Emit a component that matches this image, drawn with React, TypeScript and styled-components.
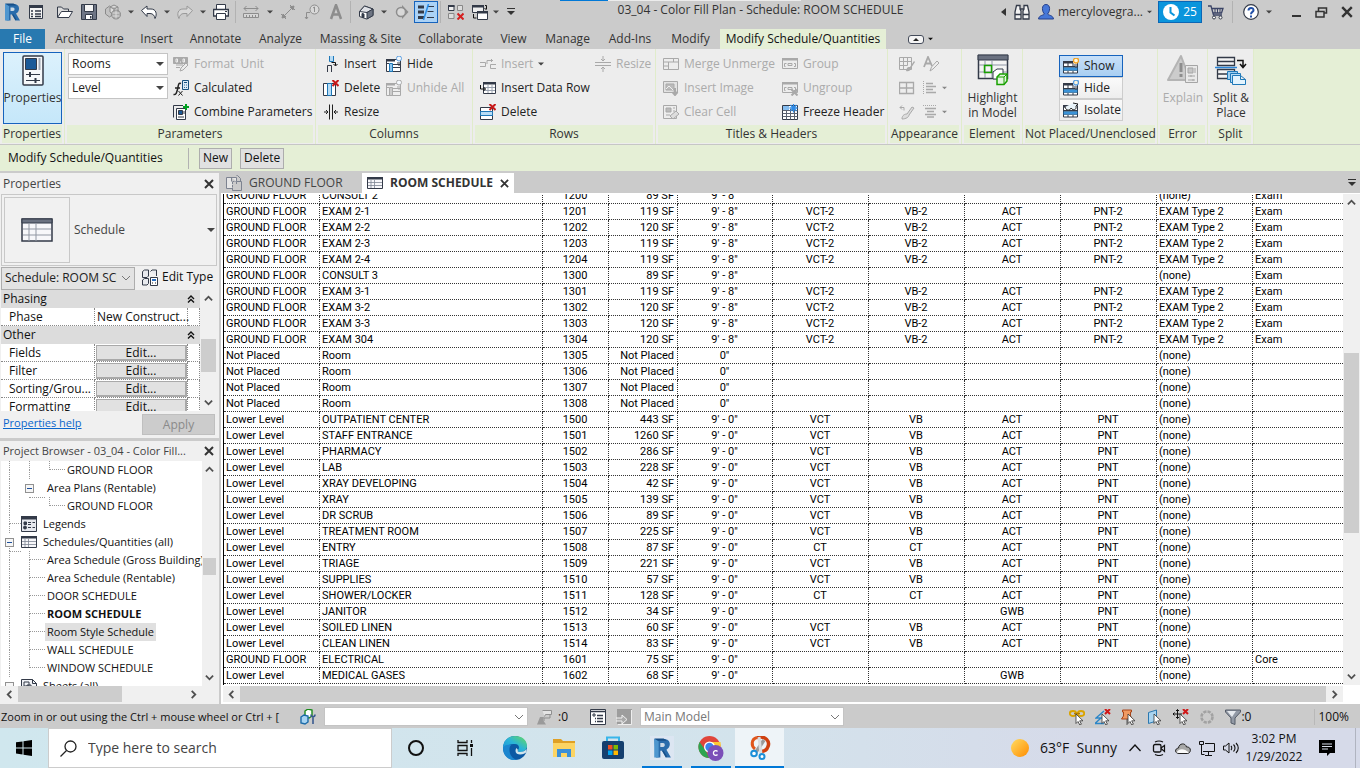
import React from 'react';
import styled, { createGlobalStyle, css } from 'styled-components';

const Global = createGlobalStyle`
  *, *::before, *::after { box-sizing: border-box; }
  html, body, #root { height: 100%; margin: 0; }
  body { font: 12px/16px "Open Sans", "Segoe UI", sans-serif; color: #222; background: #cbcbcb; overflow: hidden; }
  button, input, select { font: inherit; color: inherit; margin: 0; }
  button { background: none; border: 0; padding: 0; }
  svg { display: block; flex: none; }
`;

const ink = '#333a48';
const blue = '#1f78b8';
const gray = '#a9a9a9';

/* ---------- icon helpers ---------- */
type IconProps = { w?: number; h?: number; box?: string; children: React.ReactNode };
const Icon = ({ w = 16, h, box, children }: IconProps) => (
  <svg width={w} height={h ?? w} viewBox={box ?? `0 0 ${w} ${h ?? w}`} fill="none" stroke={ink} aria-hidden="true">
    {children}
  </svg>
);
const Caret = ({ color = '#444', w = 8 }: { color?: string; w?: number }) => (
  <Icon w={w} h={4} box="0 0 8 4"><path d="M0 0h8L4 4z" fill={color} stroke="none" /></Icon>
);
const Chevron = ({ turn = 0, color = '#505050', s = 9, sw = 2 }: { turn?: number; color?: string; s?: number; sw?: number }) => (
  <Icon w={s} box="0 0 10 10"><path d="M1 7l4-4 4 4" transform={`rotate(${turn} 5 5)`} stroke={color} strokeWidth={sw} /></Icon>
);
const Cross = ({ s = 10, sw = 2, color = '#333' }: { s?: number; sw?: number; color?: string }) => (
  <Icon w={s} box="0 0 10 10"><path d="M1 1l8 8M9 1L1 9" stroke={color} strokeWidth={sw} /></Icon>
);

const RevitLogo = ({ s = 18 }: { s?: number }) => (
  <Icon w={s} box="0 0 18 18">
    <path d="M2 1h8.500c7.500 0 6.500 8 2.500 9.500l4 7h-4.500L9 11.500H7.500v6H3.500z" fill="#2a6cab" stroke="none" />
    <path d="M2 .500l4 2.500v14.500H2z" fill="#4f96cf" stroke="none" />
    <path d="M7.500 4.500H10c2 0 2 3.500 0 3.500H7.500z" fill="#cbd9e6" stroke="none" />
    <path d="M2 .500h8.500l3 2H5.500z" fill="#174f88" stroke="none" />
    <path d="M9 11.500l3.500 6 1-1-3-5z" fill="#174f88" stroke="none" />
  </Icon>
);
const UiIcon = () => (
  <Icon><path d="M1.500 1.500h13v13h-13z" fill="#f4f4f4" /><path d="M1 1h14v3H1z" fill={ink} stroke="none" /><path d="M3 7h2M3 10h2M3 12.500h2M7 7h6M7 10h6M7 12.500h6" strokeWidth="1.500" /></Icon>
);
const OpenIcon = () => (
  <Icon><path d="M.500 13V3h4l2 2h5v3" fill="#ddd" /><path d="M.500 13.500L4.500 7.500h11L12 13.500z" fill="#fff" /></Icon>
);
const SaveIcon = () => (
  <Icon><path d="M.500.500h15v15h-15z" fill="#6e7585" /><path d="M3.500.500h9v7h-9z" fill="#f5f5f5" /><path d="M4.500 10.500h7v5h-7z" fill="#fff" /><path d="M9 12h1.500v2.500H9z" fill={ink} stroke="none" /></Icon>
);
const SyncIcon = () => (
  <Icon><g stroke="#8a8a8a" fill="#c2c2c2"><path d="M.500 5l4-3 4 3v5l-4 3-4-3z" /><path d="M5 3l4-2 4 2v5l-4 3-4-3z" fill="#dcdcdc" /><path d="M5 3l4 2 4-2M9 5v6" /><circle cx="11" cy="10.500" r="4.500" fill="#aaa" /><path d="M7.500 9h7M7.500 12h7M11 6.500v8" stroke="#ddd" /></g></Icon>
);
const UndoIcon = () => (
  <Icon><path d="M.500 6.500L6 2v3h4c5 0 6.500 5 4 9.500-.500-3-2-5-5-5H6v3z" fill="#fff" stroke={ink} /></Icon>
);
const RedoIcon = () => (
  <Icon><path d="M15.500 6.500L10 2v3H6C1 5-.500 10 2 14.500c.500-3 2-5 5-5h3v3z" fill="#d8d8d8" stroke="#999" /></Icon>
);
const PrintIcon = () => (
  <Icon><path d="M3.500.500h9v6h-9z" fill="#fff" /><path d="M.500 5.500h15v6.500H.500z" fill="#fff" strokeWidth="1.500" /><path d="M3.500 9.500h9v6h-9z" fill="#fff" /><path d="M12 7.500h2" /></Icon>
);
const MeasureIcon = () => (
  <Icon><g stroke="#8d8d8d"><path d="M1 4.500h14M3.500 2L1 4.500 3.500 7M12.500 2L15 4.500 12.500 7" /><path d="M.500 9.500h15v4H.500z" fill="#d6d6d6" /><path d="M3.500 11v2M6.500 11v2M9.500 11v2M12.500 11v2" /></g></Icon>
);
const DimIcon = () => (
  <Icon><g stroke="#8d8d8d"><path d="M3 13L13 3M1 10l5 5M10 1l5 5" /><path d="M2 14l1-4 3 3zM14 2l-4 1 3 3z" fill="#8d8d8d" /></g></Icon>
);
const TagIcon = () => (
  <Icon><g stroke="#8d8d8d"><circle cx="10.500" cy="5.500" r="4.500" fill="#d8d8d8" /><path d="M10.500 3v5M9 4l1.500-1M6 8.500H2.500V15M1 13l1.500 2L4 13" /></g></Icon>
);
const LetterIcon = () => (
  <Icon><path d="M3 15L8 1l5 14M4.500 10.500h7" stroke="#8d8d8d" strokeWidth="2.500" /></Icon>
);
const HouseIcon = () => (
  <Icon><path d="M1.500 7.500l5-5.500 8.500 3v6.500L8.500 15l-7-2.500z" fill="#fff" /><path d="M6.500 2l8.500 3-6 3.500-7.500-1z" fill="#dfe1e6" /><path d="M9 8.500L15 5v6.500L9 15z" fill="#6d7482" /><path d="M4 9.500l2 .500v3.500L4 13z" fill={ink} /></Icon>
);
const SectionIcon = () => (
  <Icon><path d="M8 1l6.500 7L8 15z" fill="#8d8d8d" stroke="none" /><circle cx="7" cy="8" r="4.500" fill="#d8d8d8" stroke="#8d8d8d" strokeWidth="1.500" /></Icon>
);
const ThinIcon = () => (
  <Icon><path d="M0 3h6M0 8h6M0 13.500h6" strokeWidth="3" /><path d="M10 2.500h6M9.500 7.500h6M9 13.500h7" /><path d="M10.500 0L5.500 16" stroke="#2a8de8" strokeWidth="1.500" /></Icon>
);
const CloseHiddenIcon = () => (
  <Icon><path d="M.500 1.500H6v5H.500z" fill="#eee" /><path d="M0 1h6.500v2H0z" fill={ink} stroke="none" /><path d="M9.500 1.500h5v5h-5zM.500 9.500H6v5H.500z" fill="#ddd" stroke="#888" /><path d="M9.500 9.500l6 6m0-6l-6 6" stroke="#d42020" strokeWidth="2" /></Icon>
);
const SwitchIcon = () => (
  <Icon><path d="M.500 1.500h11v7H.500z" fill="#eee" /><path d="M0 1h12v2.500H0z" fill={ink} stroke="none" /><path d="M5.500 7.500h10v8h-10z" fill="#fff" /><path d="M5 7h11v2.500H5z" fill={ink} stroke="none" /><path d="M1.500 10v4h3M13 1.500h1.500V5M12.500 4l2 2" stroke="#111" /></Icon>
);
const MoreIcon = () => (
  <Icon w={10} h={10}><path d="M1 1.500h8" stroke="#333" /><path d="M1 4h8L5 8z" fill="#333" stroke="none" /></Icon>
);
const Binoculars = () => (
  <Icon><path d="M2.500 1.500H6V5l1 2v8H1V8zM10 1.500h3.500L15 8v7H9V7l1-2z" fill="#f2f2f2" strokeWidth="1.300" /><path d="M6 5h4M1 10.500h6M9 10.500h6" strokeWidth="1.300" /></Icon>
);
const UserIcon = () => (
  <Icon><path d="M8 .500c5 0 4 7.500 1.500 9.500 1 1.500 5.500 1 6 5H.500c.500-4 5-3.500 6-5C4 8 3 .500 8 .500z" fill="#4677d8" stroke="#27408b" /></Icon>
);
const ClockIcon = () => (
  <Icon><circle cx="8" cy="8" r="8" fill="#fff" stroke="none" /><path d="M7.500 3v5.500l4 3" stroke="#0a95dc" strokeWidth="2" /></Icon>
);
const CartIcon = () => (
  <Icon><path d="M0 2h3l2.500 9H14M3.500 4.500H15L13.500 9H5" stroke="#3b4466" strokeWidth="1.300" /><path d="M7 5v4M9.500 5v4M12 5v4" stroke="#3b4466" /><circle cx="6" cy="13.500" r="1.500" fill="#fff" /><circle cx="12.500" cy="13.500" r="1.500" fill="#fff" /></Icon>
);
const HelpIcon = () => (
  <Icon><circle cx="8" cy="8" r="7.300" fill="#fff" strokeWidth="1.200" /><path d="M5.500 6.500C5.500 3 10.800 3.200 10.500 6.300 10.300 8 8 7.800 8 10.200M8 11.500v2" stroke="#2250a8" strokeWidth="2" /></Icon>
);

/* ---------- ribbon icons ---------- */
const PropertiesBig = () => (
  <Icon w={22} h={31}><rect x="1" y="1" width="20" height="29" rx="1" fill="#f6f8fa" strokeWidth="1.500" /><path d="M3.500 3.500h11v11h-11z" fill="#1b5a98" /><path d="M17.500 3v12" stroke="#a0a8b4" strokeWidth="2" /><path d="M4 19.500h14M4 25.500h14" /><path d="M8 17v5M13.500 23v5" strokeWidth="2" /></Icon>
);
const FormatIcon = () => (
  <Icon><path d="M.500 1.500h14v6H.500z" fill="#aaa" stroke={gray} /><path d="M3 3h1.500v3H3zM10 3h1.500v3H10zM7 6h1" stroke="#eee" /><path d="M3 9h7M3 11.500h4" stroke={gray} /><path d="M7 15l1-3 5-5 2 2-5 5z" fill="#eee" stroke={gray} /></Icon>
);
const FxIcon = () => (
  <Icon><path d="M8 3.500C5 2 5.500 6 4.500 9.500S3 15 .500 14.500M2 8h5" stroke="#222" strokeWidth="1.500" /><path d="M5.500 11l4 4.500m0-4.500l-4 4.500" stroke="#222" /><path d="M9.500.500h6v9h-6z" fill="#d9ebf8" stroke="#16507e" /><path d="M11 2.500h3M11 5h.800M13.200 5h.800M11 7.500h.800M13.200 7.500h.800" stroke="#16507e" /></Icon>
);
const CombineIcon = () => (
  <Icon><path d="M.500 13.500v-12H10" /><path d="M3.500 4.500h9v11h-9z" fill="#fff" /><path d="M5.500 6.500h4v4h-4z" fill="#1b5a98" /><path d="M5 13h6M11 7v3" /><path d="M13 0v6M10 3h6" stroke="#00a020" strokeWidth="2" /></Icon>
);
const ColInsert = () => (
  <Icon><path d="M6.500 0v5.500h4V0" fill="#b8dcf5" stroke={blue} /><path d="M4.500 16V9.500h4V16" /><path d="M8.500 6.500h4v3M10.500 8l2 2 2-2" stroke="#111" /></Icon>
);
const ColDelete = () => (
  <Icon><path d="M.500 3.500h12v12H.500z" fill="#fff" /><path d="M4.500 3.500h4v12h-4z" fill="#b8dcf5" stroke={blue} /><path d="M9.500 0l6 6m0-6l-6 6" stroke="#c81818" strokeWidth="2" /></Icon>
);
const ColResize = () => (
  <Icon><path d="M6.500.500v15M9.500.500v15M1 8h4M11 8h4M3 6l2 2-2 2M13 6l-2 2 2 2" stroke="#222" /></Icon>
);
const HideCol = ({ off }: { off?: boolean }) => {
  const c = off ? gray : ink;
  return <Icon><path d="M.500 3.500h14v12H.500z" fill={off ? '#eee' : '#fff'} stroke={c} /><path d="M0 3h9v2.500H0z" fill={c} stroke="none" /><path d="M6 8.500h8M6 11.500h8M1 7.500h2" stroke={c} /><path d="M3.500 7.500h3v8h-3z" fill={off ? '#ccc' : '#8fc6ee'} stroke={off ? gray : blue} /><circle cx="13" cy="2.500" r="2.500" fill="#f4f8fc" stroke={off ? gray : '#5a9ee0'} /><path d="M12 6v3h2V6" stroke={c} /></Icon>;
};
const RowInsertOff = () => <Icon><path d="M0 6.500h5.500v4H0M16 12.500h-5.500v-4H16M7 8V4.500h6M11.500 3v3" stroke={gray} /></Icon>;
const RowResizeOff = () => <Icon><path d="M0 6.500h16M0 9.500h16M8 0v5M8 11v5M6 3l2 2 2-2M6 13l2-2 2 2" stroke={gray} /></Icon>;
const InsertRow = () => <Icon><path d="M3.500 2.500h12v11h-12z" fill="#fff" /><path d="M3 2h13v2.500H3z" fill={ink} stroke="none" /><path d="M4 7.500h11M4 10.500h11M8 5v8M12 5v8" stroke="#9ba3b0" /><path d="M.500 5v4h5M3.500 7l2 2-2 2" stroke="#111" /></Icon>;
const DeleteRow = () => <Icon><path d="M.500 3.500h12v12H.500z" fill="#fff" /><path d="M.500 7.500h12v4H.500z" fill="#b8dcf5" stroke={blue} /><path d="M9.500 0l6 6m0-6l-6 6" stroke="#c81818" strokeWidth="2" /></Icon>;
const MergeIcon = () => <Icon><path d="M.500 2.500h15v11H.500zM.500 6h15M5.500 6v7.500M10.500 2.500V6M.500 10h5" stroke={gray} /></Icon>;
const ImageIcon = () => <Icon><path d="M.500 1.500h14v11H.500z" fill="#e2e2e2" stroke={gray} /><path d="M3 4h8v6H3z" fill="#bbb" stroke={gray} /><path d="M3 9l3-3 4 4" stroke="#eee" /><path d="M12 8v6M9.500 12l2.500 3 2.500-3" stroke={gray} strokeWidth="2" /></Icon>;
const ClearIcon = () => <Icon><path d="M.500 1.500h13v13H.500z" stroke={gray} /><path d="M3 4h5v4H3z" fill="#bbb" stroke={gray} /><path d="M10 4h2M10 7h2M3 11h4" stroke={gray} /><path d="M7 12l6-5 3 3-6 5z" fill="#ddd" stroke={gray} /></Icon>;
const GroupIcon = ({ x }: { x?: boolean }) => <Icon><path d="M.500 2.500h15v10H.500z" stroke={gray} /><path d="M0 2h16v2.500H0z" fill={gray} stroke="none" /><path d="M3.500 10.500h-1v-3h2M12 7.500h1.500v3H12M6 7.500h4v2H6z" stroke={gray} />{x && <path d="M9.500 9.500l6 6m0-6l-6 6" stroke={gray} strokeWidth="2" />}</Icon>;
const FreezeIcon = () => <Icon><path d="M.500 1.500h15v14H.500z" fill="#fff" /><path d="M.500 6.500h15M.500 9.500h15M.500 12.500h15M4.500 5v10.500M8.500 5v10.500M12.500 5v10.500" stroke="#5b6270" /><path d="M1 2h6v4H1z" fill="#85bdf0" stroke="none" /><path d="M11.500-.500v9M7.500 4h8M8.500 1l6 6M14.500 1l-6 6" stroke="#2f8be6" strokeWidth="1.300" /></Icon>;
const ShadeIcon = () => <Icon><path d="M.500 1.500h12v12H.500zM.500 5.500h12M.500 9.500h8M4.500 1.500v12M8.500 1.500v8" stroke={gray} /><path d="M7 15c1-5 3-4 4-4l4-6 1 1-4 6c0 2-2 4-5 3z" fill={gray} stroke="none" /></Icon>;
const FontIcon = () => <Icon><path d="M1 11L5 1l4 9M2.500 7.500h5" stroke={gray} strokeWidth="1.800" /><path d="M7 15l1.500-4L14 5l2 2-6 6z" fill="#eee" stroke={gray} /></Icon>;
const BordersIcon = () => <Icon><path d="M.500 2.500h14v11H.500zM7.500 2.500v11M.500 8h14" stroke={gray} strokeWidth="1.300" /></Icon>;
const ResetIcon = () => <Icon><path d="M3 15c0-4 3-5 5-5l5-7 2 1-5 7c0 2-3 4-7 4z" stroke={gray} fill="#ddd" /><path d="M1 3.500h4v3M3 1.500l-2 2 2 2" stroke={gray} /></Icon>;
const AlignIcon = ({ mid }: { mid?: boolean }) => <Icon>{mid ? <path d="M0 1.500h14" stroke={gray} strokeDasharray="1 1" /> : <path d="M.500 1v14" stroke={gray} strokeDasharray="1 1" />}<path d={mid ? 'M2 4.500h11M4 7.500h7M2 10.500h11M4 13h7' : 'M3 3.500h7M3 6.500h10M3 9.500h7M3 12.500h10'} stroke={gray} strokeWidth="1.300" /></Icon>;
const HighlightBig = () => (
  <Icon w={32} h={32}><path d="M1.500 1.500h29v23h-29z" fill="#f4f4f4" strokeWidth="1.500" /><path d="M1 1h30v5H1z" fill="#6a7180" /><path d="M2 11h28M2 18h28M8 6v18M15 6v18" stroke="#8e95a4" /><path d="M7.500 11.500h7v7h-7z" stroke="#18a000" strokeWidth="1.500" /><path d="M16 18l4-3h6v6l-4 4h-6z" fill="#fff" /><path d="M20 23l3-3h7v7l-3 3.500h-7z" fill="#e3f5df" stroke="#18a000" strokeWidth="1.500" /><path d="M20 23h7v7.500M27 23l3-3" stroke="#18a000" /></Icon>
);
const RowState = ({ bulb, glasses }: { bulb?: string; glasses?: boolean }) => (
  <Icon><path d="M.500 3.500h14v11.500H.500z" fill="#fff" /><path d="M0 3h10v2.500H0z" fill={ink} stroke="none" /><path d="M1 8.500h13M5 4v4M10 5v3M5 13v2M10 13v2" stroke={ink} /><path d="M.500 9.500h14v3H.500z" fill="#3b93d8" stroke="#16507e" strokeWidth=".600" />{bulb && <><circle cx="13" cy="2.500" r="2.500" fill="#fff6dc" stroke={bulb} strokeWidth="1.300" /><path d="M12 6v3h2V6" fill="#fff" /></>}{glasses && <path d="M2 5c1 4 5 4 6 1 2 3 6 2 5-2l2-2-5-1" fill="#e8f2f8" stroke="#222" />}</Icon>
);
const ExplainBig = () => (
  <Icon w={32} h={32}><path d="M14 2L1 26h22z" fill="#ccc" stroke="#b4b4b4" strokeWidth="2" strokeLinejoin="round" /><path d="M14 9v9M14 20v3" stroke="#8d8d8d" strokeWidth="3" /><path d="M18.500 11.500h12v17h-12z" fill="#e9e9e9" stroke="#a5a5a5" /><path d="M21 14h5v5h-5z" fill="#c6c6c6" stroke="#a5a5a5" /><path d="M28 14v5M21 22h7M21 26h7M24 21v2M26 25v2" stroke="#a5a5a5" /></Icon>
);
const SplitBig = () => (
  <Icon w={32} h={32}><path d="M2.500 3.500h17v8h-17zM2.500 15.500h17v9h-17zM3 7.500h16M3 20h16" fill="#f4f4f4" strokeWidth="1.300" /><path d="M0 13.500h22" stroke="#2b86d8" strokeWidth="1.500" /><path d="M22 6.500h6v6M25 10l3 3.500 3-3.500" stroke="#111" strokeWidth="1.500" /><path d="M12.500 17.500h10v8h-10z" fill="#9bcdf0" stroke={blue} /><path d="M15.500 19.500h10v9h-10z" fill="#b8dcf5" stroke={blue} /><path d="M17.500 21.500h8l5 4v5h-13zM25.500 21.500v4h5" fill="#e3f3fd" stroke={blue} /></Icon>
);

/* ---------- tables / tree icons ---------- */
const TableIcon = ({ w = 16, h = 12 }: { w?: number; h?: number }) => (
  <Icon w={w} h={h} box="0 0 16 12"><path d="M.500.500h15v11H.500z" fill="#f7f7fa" /><path d="M0 0h16v2.500H0z" fill={ink} stroke="none" /><path d="M1 5.500h14M1 8.500h14M4 3v8M7.500 3v8" stroke="#7d8594" strokeWidth=".800" /></Icon>
);
const TableBig = () => (
  <Icon w={32} h={24}><path d="M1 1h30v22H1z" fill="#f7f7fa" strokeWidth="1.500" /><path d="M1 1h30v4H1z" fill="#6a7180" /><path d="M2 11h28M2 17h28M8 5v18M15 5v18" stroke="#9197a3" /></Icon>
);
const LegendIcon = () => <Icon><path d="M.500.500h15v15H.500z" fill="#e6e8ee" /><path d="M0 0h16v3.500H0z" fill={ink} stroke="none" /><circle cx="4" cy="11.500" r="1.500" fill={ink} /><path d="M3 6h2.500v2.500H3z" fill={ink} /><path d="M7 6.500h3M11.500 6.500H14M7 8.500h3M7 11.500h3M11.500 11.500H14" /></Icon>;
const SheetIcon = () => <Icon><path d="M.500 1.500h11l4 4v8H.500z" fill="#f0f2f6" /><path d="M11.500 1.500v4h4M3 4h5v4H3zM6 7h4v4H6z" /></Icon>;
const PlanIcon = () => <Icon><path d="M6 2.500H.500v11H6M5.500 2.500h5v4" fill="#e6e6e6" stroke="#7d8390" /><path d="M10.500 6.500h5v9h-9v-3M5.500 2.500v4M10.500.500h1l3 3v3" stroke="#7d8390" fill="none" /><path d="M6.500 7v6M6.500 6.500h4M10.500 7v3" stroke="#7d8390" strokeDasharray="2 1" /></Icon>;
const EditTypeIcon = () => <Icon w={17} h={17}><path d="M1.500 2.500l2-1.500h4v6l-1.500 1.500H1.500zM9.500 2.500L11 1h4.500v6M1.500 11l2-1.500h4v5L6 16H1.500z" fill="#e8eaee" /><path d="M9.500 8.500h7v8h-7z" fill="#fff" stroke={ink} /><path d="M11 10h4v2h-4z" fill="#2a6fc0" stroke="none" /><path d="M11 14h1M14 14h1" stroke="#222" /></Icon>;
const DoubleUp = () => <Icon w={8} h={8}><path d="M1 4l3-3 3 3M1 7.500l3-3 3 3" stroke="#111" strokeWidth="1.400" /></Icon>;

/* ---------- status bar icons ---------- */
const pointer = <path d="M7 5v9.500l2-2 1.800 3.500 1.600-.800-1.700-3.400H14z" fill="#fff" stroke="#333" strokeWidth=".800" />;
const WorksetIcon = () => <Icon><path d="M5 2l3-2 4 1v6l-3 2-4-1z" fill="#fff" stroke="#1a8a1a" strokeWidth="1.400" /><path d="M1 8l3-2 4 1v6l-3 2-4-1z" fill="#a8d4f2" stroke="#1a6aa8" strokeWidth="1.400" /><path d="M11 5.500c0 3 4 3 4 0M13 8v7" stroke="#3a5a90" strokeWidth="1.600" /></Icon>;
const EditableIcon = () => <Icon><path d="M5.500 1.500h9v4h-6l-1 2" stroke="#8f8f8f" fill="#e4e4e4" /><path d="M13 6v3H7v3" stroke="#8f8f8f" /><path d="M3 8h4l-1 3 3 4.500H0z" fill="#9a9a9a" stroke="none" /></Icon>;
const OptionsIcon = () => <Icon><path d="M.500.500h15v15H.500z" fill="#fff" /><path d="M1 2.500h14" strokeWidth="1.500" /><path d="M3 5h2v2H3z" /><path d="M7 6.500h6M7 9.500h6M7 12.500h6M5 9.500h1M5 12.500h1" strokeWidth="1.500" /></Icon>;
const AddOption = () => <Icon><path d="M1 0h15v15H1z" fill="#9d9d9d" stroke="none" /><path d="M2 15.500h13.500V1" stroke="#eee" /><path d="M0 9h6V6l5 4.500L6 15v-3H0z" fill="#aaa" stroke="#f2f2f2" /></Icon>;
const LinkSel = () => <Icon><ellipse cx="4" cy="4.500" rx="3.200" ry="2.500" stroke="#dba400" strokeWidth="1.800" /><ellipse cx="12" cy="4.500" rx="3.200" ry="2.500" stroke="#dba400" strokeWidth="1.800" /><path d="M5 4.500h6" stroke="#b07c00" strokeWidth="1.300" />{pointer}</Icon>;
const UnderSel = () => <Icon><path d="M9 2L1 9h9M6 9l-6 5.500h9" stroke="#2b86c8" strokeWidth="1.300" /><path d="M10 0l5 5m0-5l-5 5" stroke="#d01818" strokeWidth="2" />{pointer}</Icon>;
const PinSel = () => <Icon><path d="M1.500 1h9v2h-1v4l2 3H.500l2-3V3h-1z" fill="#f09a62" stroke="#a8451a" /><path d="M6 10v6" stroke="#555" />{pointer}</Icon>;
const FaceSel = () => <Icon><path d="M1.500 3.500l8-2.500v11l-8 2.500z" fill="#a9d4f0" stroke="#2b78b0" />{pointer}</Icon>;
const DragSel = () => <Icon><path d="M4.500.500v9M0 5h9M3 2L4.500.500 6 2M3 8l1.500 1.500L6 8M1.500 3.500L0 5l1.500 1.500" stroke="#111" /><path d="M10 0l5 5m0-5l-5 5" stroke="#d01818" strokeWidth="2" />{pointer}</Icon>;
const BusyIcon = () => <Icon><circle cx="8" cy="8" r="5.500" stroke="#a2a2a2" strokeWidth="2.600" strokeDasharray="3.200 1.100" /></Icon>;
const FunnelIcon = () => <Icon><path d="M.500 1h15v2L10 9v6.500L6 14V9L.500 3z" fill="#9299a5" stroke="#555c68" /><path d="M2 2h9L7 8z" fill="#e6e9ee" stroke="none" /></Icon>;

/* ---------- taskbar icons ---------- */
const WinIcon = () => <Icon><path d="M0 2.300L6.500 1.400v6H0zM7.500 1.200L16 0v7.400H7.500zM0 8.400h6.500v6L0 13.600zM7.500 8.400H16V16l-8.500-1.200z" fill="#000" stroke="none" /></Icon>;
const SearchIcon = () => <Icon w={17}><circle cx="10.500" cy="6.500" r="5.500" stroke="#222" strokeWidth="1.300" /><path d="M6.500 10.500L.500 16.500" stroke="#222" strokeWidth="1.300" /></Icon>;
const TaskView = () => <Icon w={18}><path d="M2 1v2.500h9V1M2 17v-2.500h9V17M2 6.500h9v5H2zM15.500 1v3M15.500 9v8" stroke="#111" strokeWidth="1.300" /><path d="M14 5h3v3h-3z" fill="#111" stroke="none" /></Icon>;
const EdgeIcon = () => (
  <Icon w={24}>
    <defs><linearGradient id="edgeTop" x1="0" y1="1" x2="1" y2="0"><stop offset="0" stopColor="#1a8fd8" /><stop offset=".5" stopColor="#2ab4d8" /><stop offset="1" stopColor="#68dd5a" /></linearGradient></defs>
    <circle cx="12" cy="12" r="12" fill="#0c59a4" stroke="none" />
    <path d="M0 12C0 5 5 0 12 0s12 4 12 10c0 4-4 6-7 6-2 0-3-1-2-2 2-2 1-6-3-6C6 8 1 11 0 12z" fill="url(#edgeTop)" stroke="none" />
    <path d="M0 12c1-3 5-4 8-3-3 3-2 13 6 15C6 25 0 20 0 12z" fill="#1b86cf" stroke="none" />
    <path d="M15 14c-1 1 0 2 2 2 3 0 5-1 6.500-3v3c-2 3-11 4-11-1 0-2 1-3 1-3z" fill="#d2e5ec" stroke="none" />
  </Icon>
);
const FolderIcon = () => <Icon w={22} h={20}><path d="M0 1h8l2 2h12v4H0z" fill="#dfa025" stroke="none" /><path d="M0 5h22v14H0z" fill="#fcd462" stroke="none" /><path d="M4 19v-8h14v8h-4v-4H8v4z" fill="#3a8fd8" stroke="none" /></Icon>;
const StoreIcon = () => <Icon w={24}><path d="M6 6V1.500h12V6" stroke="#38b6ea" strokeWidth="2" /><rect x="1" y="5" width="22" height="18" rx="2" fill="#153f6e" stroke="none" /><path d="M7 9h4.500v4.500H7z" fill="#f25022" stroke="none" /><path d="M12.500 9H17v4.500h-4.500z" fill="#7fba00" stroke="none" /><path d="M7 14.500h4.500V19H7z" fill="#00a4ef" stroke="none" /><path d="M12.500 14.500H17V19h-4.500z" fill="#ffb900" stroke="none" /></Icon>;
const ChromeIcon = () => (
  <Icon w={26} h={26}>
    <g stroke="none"><circle cx="11.500" cy="12" r="11" fill="#e0453a" /><path d="M1.500 7L8 16l3 7C3 23-2 14 1.500 7z" fill="#2da551" /><path d="M12 7h10.500C24 14 19 23 11 23l5-8z" fill="#fcc934" /><circle cx="11.500" cy="12" r="5.500" fill="#fff" /><circle cx="11.500" cy="12" r="4.200" fill="#3b82ec" /><circle cx="17.500" cy="18" r="8" fill="#7b4fb8" /></g>
    <path d="M19.500 16.500a2.300 2.300 0 1 0 0 3" stroke="#fff" strokeWidth="1.300" />
  </Icon>
);
const SnipIcon = () => <Icon w={22} h={24}><path d="M8 1.500c9-2 13 4 11 9-1 3-4 5-7 5" stroke="#cf4010" strokeWidth="3.500" /><path d="M8 1.500C2 3 2 10 6 13" stroke="#e0561c" strokeWidth="3" /><path d="M15 4L7 16" stroke="#9a9a9a" strokeWidth="3.500" /><path d="M10 1l2 17" stroke="#d9dcdf" strokeWidth="3" /><circle cx="5" cy="17.500" r="2.800" fill="#fff" stroke="#1b8fd8" strokeWidth="2" /><circle cx="13" cy="20.500" r="2.500" fill="#fff" stroke="#1b8fd8" strokeWidth="2" /></Icon>;
const SunIcon = () => <Icon w={18}><defs><linearGradient id="sun" x1="0" y1="0" x2="1" y2="1"><stop offset="0" stopColor="#ffdc62" /><stop offset="1" stopColor="#ff8c00" /></linearGradient></defs><circle cx="9" cy="9" r="9" fill="url(#sun)" stroke="none" /></Icon>;
const MeetIcon = () => <Icon><rect x="2.500" y="4.500" width="7.500" height="7.500" rx="1.500" stroke="#111" strokeWidth="1.300" /><path d="M10 8l3.500-2.500v6L10 8.500M4 2c3-1.500 5-1.500 8 0M4 14.500c3 1.500 5 1.500 8 0" stroke="#111" strokeWidth="1.200" /></Icon>;
const CloudIcon = () => <Icon><path d="M4 13.500c-4.500 0-4.500-5-.500-5.500C4 3 10.500 2.500 11.500 7c5-.500 5 6 1 6.500z" fill="#a8a8a8" stroke="#222" /><path d="M1.500 12.500C4 8 9 8 14 12.500l-1.500.500H4z" fill="#fafafa" stroke="none" /></Icon>;
const NetIcon = () => <Icon><path d="M6 3.500h9.500v8H4M9.500 12v3M6 15.500h7" stroke="#111" /><path d="M.500 1.500h4v3h-4zM2.500 5v9.500h3" stroke="#111" /></Icon>;
const VolIcon = () => <Icon><path d="M.500 6h2L6 3v10L2.500 10h-2z" stroke="#111" /><path d="M8 6c1 1 1 3 0 4M10.500 4.500c2 2 2 5 0 7M13 3c3 3 3 7 0 10" stroke="#111" strokeWidth="1.100" /></Icon>;
const NoteIcon = () => <Icon><path d="M0 0h16v13h-5l-3 3v-3H0z" fill="#000" stroke="none" /><path d="M3 4h10M3 6.500h10M3 9h6" stroke="#d6dce8" /></Icon>;

/* ---------- shell ---------- */
const Shell = styled.div`display: flex; flex-direction: column; height: 100vh; min-width: 1260px; position: relative;`;
const TitleBar = styled.header`display: flex; align-items: center; height: 29px; padding-bottom: 5px; flex: none; color: #333;`;
const Group = styled.div<{ $gap?: number }>`display: flex; align-items: center; gap: ${p => p.$gap ?? 0}px;`;
const ToolButton = styled.button<{ $on?: boolean; $w?: number }>`
  display: flex; align-items: center; justify-content: center; width: ${p => p.$w ?? 24}px; height: 22px;
  ${p => p.$on && css`background: #abd2f6; border: 1px solid #1663bd;`}
`;
const ToolGap = styled.span<{ $w?: number }>`width: ${p => p.$w ?? 5}px;`;
const Divider = styled.span<{ $h?: number; $m?: number }>`width: 1px; height: ${p => p.$h ?? 22}px; margin: 0 ${p => p.$m ?? 3}px 0 ${p => (p.$m ?? 3) - 1}px; background: #b2b2b2; flex: none;`;
const WindowTitle = styled.h1`flex: 1; margin: 0; padding-bottom: 4px; font-size: 12px; font-weight: 400; text-align: center; white-space: nowrap;`;
const ShareBar = styled.div`position: absolute; top: 0; left: 560px; width: 241px; height: 1px; background: linear-gradient(to right, #0078d7 48px, #ececec 48px);`;
const UserButton = styled.button`display: flex; align-items: center; gap: 4px; margin-left: 4px;`;
const Trial = styled.button`display: flex; align-items: center; justify-content: center; gap: 4px; width: 44px; height: 22px; margin-left: 6px; color: #fff; background: #0a95dc; border: 1px solid #0b66b5;`;

const TabStrip = styled.nav`display: flex; align-items: stretch; height: 20px; flex: none;`;
const RibbonTab = styled.button<{ $w: number; $kind?: 'file' | 'on' }>`
  width: ${p => p.$w}px; white-space: nowrap; color: #333;
  ${p => p.$kind === 'file' && css`background: #2879b0; color: #fff; margin-right: 2px;`}
  ${p => p.$kind === 'on' && css`background: #e5efd6; color: #111;`}
`;
const Collapse = styled.button`display: flex; align-items: center; gap: 4px; margin-left: 22px;`;
const CollapsePill = styled.span`display: grid; place-items: center; width: 16px; height: 9px; border: 1px solid #444b5a; border-radius: 3px; background: #f4f4f4;`;

const Ribbon = styled.section`display: flex; height: 96px; flex: none; background: #e5efd6; border-bottom: 1px solid #c6c6c6;`;
const PanelBox = styled.section<{ $w: number }>`display: flex; flex-direction: column; width: ${p => p.$w}px; border-right: 1px solid #e0eccb; background: #ededed;`;
const PanelBody = styled.div`display: flex; height: 76px; padding: 3px 2px 0 3px;`;
const PanelLabel = styled.h2`margin: 0 2px; font-size: 12px; font-weight: 400; line-height: 18px; text-align: center; background: #e5efd6; white-space: nowrap; color: #333;`;
const Stack = styled.div<{ $w?: number; $ml?: number; $gap?: number; $top?: number }>`
  display: flex; flex-direction: column; gap: ${p => p.$gap ?? 0}px; padding-top: ${p => p.$top ?? 0}px; margin-left: ${p => p.$ml ?? 0}px;
  ${p => p.$w && `width: ${p.$w}px;`}
`;
const Command = styled.button<{ $off?: boolean }>`display: flex; align-items: center; gap: 5px; height: 24px; white-space: nowrap; color: ${p => (p.$off ? '#ababab' : '#222')};`;
const BigCommand = styled.button<{ $on?: boolean; $off?: boolean }>`
  display: flex; flex-direction: column; align-items: center; gap: 4px; flex: 1; min-width: 0; height: 72px; padding-top: 2px; line-height: 15px; white-space: nowrap;
  color: ${p => (p.$off ? '#ababab' : '#333')};
  ${p => p.$on && css`background: linear-gradient(#dcf1fc, #c5e7fa); border: 1px solid #1663bd;`}
`;
const SelectWrap = styled.label<{ $w?: number; $h: number; $bg?: string; $line?: string }>`
  display: grid; grid-template-columns: minmax(0, 1fr) auto; gap: 4px; align-items: center; flex: none; ${p => p.$w && `width: ${p.$w}px;`} height: ${p => p.$h}px;
  padding: 0 3px; border: 1px solid ${p => p.$line ?? '#c4c4c4'}; background: ${p => p.$bg ?? '#fff'}; overflow: hidden;
`;
const NativeSelect = styled.select<{ $c?: string }>`appearance: none; width: 100%; height: 18px; border: 0; outline: 0; padding: 0; background: transparent; color: ${p => p.$c ?? '#222'}; overflow: hidden;`;
const StateButton = styled.button<{ $on?: boolean }>`
  display: flex; align-items: center; gap: 5px; width: 64px; height: 22px; padding-left: 3px; border: 1px solid ${p => (p.$on ? '#1663bd' : '#cdcdcd')};
  background: ${p => (p.$on ? 'linear-gradient(#c8e0f8, #a9cff2)' : 'linear-gradient(#fafafa, #eee)')};
`;
const SmallIconRow = styled.div`display: flex; align-items: center; gap: 8px; height: 24px; padding-left: 8px;`;
const IconButton = styled.button`display: flex; align-items: center; gap: 3px;`;

const OptionsBar = styled.section`display: flex; align-items: center; height: 28px; flex: none; padding-left: 8px; background: #e5efd6; border-bottom: 2px solid #cbcbcb; color: #111;`;
const OptionsTitle = styled.span`width: 180px;`;
const FormButton = styled.button`height: 21px; padding: 0 3px; margin-left: 8px; background: #e1e1e1; border: 1px solid #adadad; &:first-of-type { margin-left: 9px; }`;

/* ---------- side panels ---------- */
const Main = styled.main`display: flex; flex: 1; min-height: 0;`;
const Side = styled.aside`display: flex; flex-direction: column; width: 221px; flex: none; border-right: 2px solid #cbcbcb; background: #f0f0f0; color: #111;`;
const SideHead = styled.header<{ $h?: number }>`display: flex; align-items: center; justify-content: space-between; height: ${p => p.$h ?? 20}px; flex: none; padding: 0 5px 0 3px; color: #444; white-space: nowrap;`;
const HeadText = styled.h2<{ $small?: boolean }>`margin: 0; font-size: ${p => (p.$small ? 11 : 12)}px; font-weight: 400;`;
const TypeBox = styled.button`display: flex; align-items: center; height: 72px; margin: 0 2px 0 1px; padding: 2px 1px 2px 2px; flex: none; border: 1px solid #c8c8c8; background: #f1f1f1; color: #444;`;
const Thumb = styled.span`display: grid; place-items: center; width: 66px; height: 66px; border: 1px solid #c8c8c8; margin-right: 4px;`;
const TypeName = styled.span`flex: 1; text-align: left;`;
const InstanceRow = styled.div`display: flex; align-items: center; gap: 6px; height: 24px; flex: none; padding-left: 1px;`;
const LinkButton = styled.button`display: flex; align-items: center; gap: 4px; padding-bottom: 2px; white-space: nowrap;`;
const ScrollArea = styled.div<{ $h?: number }>`display: flex; ${p => (p.$h ? `height: ${p.$h}px; flex: none;` : 'flex: 1; min-height: 0;')} margin: 0 2px 0 1px;`;
const Clip = styled.div`flex: 1; min-width: 0; overflow: hidden; background: #fff;`;
const PropTable = styled.table`width: 100%; border-spacing: 0; table-layout: fixed; background: #fff;
  th, td { height: 18px; padding: 0; font-weight: 400; text-align: left; white-space: nowrap; line-height: 16px; }`;
const PropHead = styled.th`background: #dcdcdc; && { padding: 0 5px 0 2px; }`;
const HeadFlex = styled.span`display: flex; align-items: center; justify-content: space-between;`;
const PropName = styled.th`border-bottom: 1px dotted #888; border-right: 1px dotted #888; && { padding-left: 8px; }`;
const PropCell = styled.td`border-bottom: 1px dotted #888; border-right: 1px dotted #888;`;
const PropText = styled.span`padding-left: 2px;`;
const EditButton = styled.button`display: block; width: 91px; height: 16px; margin: 1px 0 0 1px; line-height: 14px; background: #e1e1e1; border: 1px solid #a9a9a9; border-right-width: 2px; border-bottom-width: 2px;`;
const SideFoot = styled.div`display: flex; justify-content: space-between; height: 27px; flex: none; padding: 3px 4px 0 3px;`;
const HelpLink = styled.a`padding-top: 1px; font-size: 11px; color: #0a66cc;`;
const ApplyButton = styled.button`width: 73px; height: 21px; background: #ccc; border: 1px solid #bfbfbf; color: #8a8a8a;`;
const Splitter = styled.hr`width: 100%; height: 3px; flex: none; margin: 0; border: 0; background: #cbcbcb;`;

const ScrollBar = styled.div<{ $v?: boolean; $size?: number }>`display: flex; flex: none; background: #f0f0f0; ${p => (p.$v ? `flex-direction: column; align-items: stretch; width: ${p.$size ?? 17}px;` : `height: ${p.$size ?? 16}px;`)}`;
const ScrollButton = styled.button<{ $v?: boolean }>`display: grid; place-items: center; ${p => (p.$v ? 'height: 17px;' : 'width: 17px;')} flex: none;`;
const Track = styled.div<{ $v?: boolean }>`display: flex; flex: 1; ${p => p.$v && 'flex-direction: column;'} min-height: 0;`;
const Grip = styled.span<{ $v?: boolean; $at: number; $len?: number }>`
  background: #cdcdcd;
  ${p => (p.$v ? `margin: ${p.$at}px 1px 0; height: ${p.$len}px;` : `margin-left: ${p.$at}px; ${p.$len ? `width: ${p.$len}px;` : 'flex: 1;'}`)}
`;
type ScrollProps = { v?: boolean; at: number; len?: number; size?: number };
const Scroll = ({ v, at, len, size }: ScrollProps) => (
  <ScrollBar $v={v} $size={size}>
    <ScrollButton $v={v} aria-label={v ? 'Scroll up' : 'Scroll left'}><Chevron turn={v ? 0 : -90} /></ScrollButton>
    <Track $v={v}><Grip $v={v} $at={at} $len={len} /></Track>
    <ScrollButton $v={v} aria-label={v ? 'Scroll down' : 'Scroll right'}><Chevron turn={v ? 180 : 90} /></ScrollButton>
  </ScrollBar>
);
const ScrollFoot = styled.div<{ $left: number }>`margin: 0 17px 2px ${p => p.$left}px; flex: none;`;

const Tree = styled.ul`list-style: none; margin: 0; padding: 0; font-size: 11px;`;
const TreeRow = styled.li`display: flex; align-items: center; height: 18px; white-space: nowrap;`;
const Guide = styled.span<{ $wide?: boolean; $up?: boolean; $down?: boolean; $across?: boolean }>`
  display: grid; grid-template: 9px 9px / 8px 1fr; width: ${p => (p.$wide ? 24 : 20)}px; flex: none;
  &::before, &::after { content: ''; grid-column: 2; }
  &::before { ${p => p.$up && 'border-left: 1px dotted #999;'} ${p => p.$across && 'border-bottom: 1px dotted #999;'} }
  &::after { grid-row: 2; ${p => p.$down && 'border-left: 1px dotted #999;'} }
`;
const Expander = styled.button`grid-area: 1 / 1 / 3 / 3; width: 9px; height: 9px; margin: 5px 0 0 4px; border: 1px solid #919191; background: linear-gradient(#1c4f9c, #1c4f9c) center / 5px 1px no-repeat #f6f6f6; z-index: 1;`;
const TreeIcon = styled.span`display: grid; place-items: center; width: 16px; margin-right: 4px;`;
const TreeLabel = styled.span<{ $bold?: boolean; $sel?: boolean }>`height: 18px; line-height: 17px; padding: 0 2px; ${p => p.$bold && 'font-weight: 700;'} ${p => p.$sel && 'background: #e0e0e0;'}`;

type Node = { text: string; depth: 1 | 2 | 3; open?: boolean; icon?: React.ReactNode; last?: boolean; mid?: boolean; bold?: boolean; sel?: boolean };
const nodes: Node[] = [
  { text: 'GROUND FLOOR', depth: 3, last: true, mid: true },
  { text: 'Area Plans (Rentable)', depth: 2, open: true, last: true },
  { text: 'GROUND FLOOR', depth: 3, last: true },
  { text: 'Legends', depth: 1, icon: <LegendIcon /> },
  { text: 'Schedules/Quantities (all)', depth: 1, open: true, icon: <TableIcon /> },
  { text: 'Area Schedule (Gross Building)', depth: 2 },
  { text: 'Area Schedule (Rentable)', depth: 2 },
  { text: 'DOOR SCHEDULE', depth: 2 },
  { text: 'ROOM SCHEDULE', depth: 2, bold: true },
  { text: 'Room Style Schedule', depth: 2, sel: true },
  { text: 'WALL SCHEDULE', depth: 2 },
  { text: 'WINDOW SCHEDULE', depth: 2, last: true },
  { text: 'Sheets (all)', depth: 1, open: true, icon: <SheetIcon /> },
];

/* ---------- schedule ---------- */
const DocArea = styled.section`display: flex; flex-direction: column; flex: 1; min-width: 0; background: #fff;`;
const DocTabs = styled.div`display: flex; align-items: stretch; height: 20px; flex: none; background: #cbcbcb; color: #444;`;
const DocTab = styled.button<{ $on?: boolean; $w: number }>`display: flex; align-items: center; gap: 7px; width: ${p => p.$w}px; padding-left: 5px; white-space: nowrap; ${p => p.$on && 'background: #fff; font-weight: 700; color: #333;'}`;
const DocMenu = styled.button`margin-left: auto; width: 17px; display: grid; place-items: center;`;
const Sheet = styled.div`display: flex; flex: 1; min-height: 0; padding: 1px 0 1px 2px;`;
const SheetClip = styled.div`flex: 1; min-width: 0; overflow: hidden; border-left: 1px solid #000;`;
const Grid = styled.table`
  width: 100%; margin-top: -6px; border-spacing: 0; table-layout: fixed; font: 11px/14px Roboto, Arial, sans-serif; color: #000;
  td { height: 16px; padding: 1px 3px 0 2px; border-right: 1px dotted #333; border-bottom: 1px dotted #333; white-space: nowrap; text-align: center; }
  td:nth-child(-n + 2), td:nth-child(n + 10) { text-align: left; }
  td:nth-child(4) { text-align: right; }
  td:last-child { border-right: 0; }
`;
const widths = [96, 223, 66, 69, 95, 96, 96, 96, 96, 96];

type Row = string[];
const G = 'GROUND FLOOR', L = 'Lower Level', N = 'Not Placed';
const exam = (name: string, no: string, area: string): Row => [G, name, no, area, `9' - 8"`, 'VCT-2', 'VB-2', 'ACT', 'PNT-2', 'EXAM Type 2', 'Exam'];
const consult = (name: string, no: string): Row => [G, name, no, '89 SF', `9' - 8"`, '', '', '', '', '(none)', 'Exam'];
const unplaced = (no: string): Row => [N, 'Room', no, N, '0"', '', '', '', '', '(none)', ''];
const lower = (name: string, no: string, area: string, f = 'VCT', b = 'VB', c = 'ACT', w = 'PNT'): Row => [L, name, no, area, `9' - 0"`, f, b, c, w, '(none)', ''];
const rows: Row[] = [
  consult('CONSULT 2', '1200'),
  exam('EXAM 2-1', '1201', '119 SF'),
  exam('EXAM 2-2', '1202', '120 SF'),
  exam('EXAM 2-3', '1203', '119 SF'),
  exam('EXAM 2-4', '1204', '119 SF'),
  consult('CONSULT 3', '1300'),
  exam('EXAM 3-1', '1301', '119 SF'),
  exam('EXAM 3-2', '1302', '120 SF'),
  exam('EXAM 3-3', '1303', '120 SF'),
  exam('EXAM 304', '1304', '120 SF'),
  unplaced('1305'), unplaced('1306'), unplaced('1307'), unplaced('1308'),
  lower('OUTPATIENT CENTER', '1500', '443 SF'),
  lower('STAFF ENTRANCE', '1501', '1260 SF'),
  lower('PHARMACY', '1502', '286 SF'),
  lower('LAB', '1503', '228 SF'),
  lower('XRAY DEVELOPING', '1504', '42 SF'),
  lower('XRAY', '1505', '139 SF'),
  lower('DR SCRUB', '1506', '89 SF'),
  lower('TREATMENT ROOM', '1507', '225 SF'),
  lower('ENTRY', '1508', '87 SF', 'CT', 'CT'),
  lower('TRIAGE', '1509', '221 SF'),
  lower('SUPPLIES', '1510', '57 SF'),
  lower('SHOWER/LOCKER', '1511', '128 SF', 'CT', 'CT'),
  lower('JANITOR', '1512', '34 SF', '', '', 'GWB', 'PNT'),
  lower('SOILED LINEN', '1513', '60 SF'),
  lower('CLEAN LINEN', '1514', '83 SF'),
  [G, 'ELECTRICAL', '1601', '75 SF', `9' - 0"`, '', '', '', '', '(none)', 'Core'],
  lower('MEDICAL GASES', '1602', '68 SF', '', '', 'GWB', ''),
];

/* ---------- bottom bars ---------- */
const StatusBar = styled.footer`display: flex; align-items: center; height: 24px; flex: none; background: #cbcbcb; color: #111; padding: 1px 11px 0 1px; white-space: nowrap;`;
const StatusText = styled.span`width: 292px; margin-right: 7px; font-size: 11px;`;
const StatusCount = styled.span`margin: 0 22px 0 5px;`;
const StatusTools = styled.div`display: flex; align-items: center; gap: 10px; margin-left: auto;`;
const Zoom = styled.span`margin-left: 63px; padding-left: 3px; border-left: 1px solid #b8b8b8;`;
const TaskBar = styled.footer`display: flex; align-items: stretch; height: 40px; flex: none; background: linear-gradient(to right, #d0e7ee, #d3e3ec 55%, #d6dae9 80%); color: #111;`;
const TaskButton = styled.button<{ $w?: number; $on?: boolean; $run?: boolean }>`
  display: grid; place-items: center; width: ${p => p.$w ?? 49}px; flex: none;
  ${p => p.$run && 'background: linear-gradient(#0078d7, #0078d7) center bottom / 40px 2px no-repeat;'}
  ${p => p.$on && 'background: linear-gradient(#0078d7, #0078d7) center bottom / 100% 2px no-repeat #eef4f8;'}
`;
const SearchBox = styled.label`display: flex; align-items: center; gap: 11px; width: 344px; flex: none; padding-left: 11px; background: #fff; border: 1px solid #ccc;`;
const SearchInput = styled.input`flex: 1; border: 0; outline: 0; padding: 0; background: none; font-size: 14px; &::placeholder { color: #444; opacity: 1; }`;
const Ring = styled.span`width: 16px; height: 16px; border: 2px solid #111; border-radius: 50%;`;
const Plate = styled.span`display: grid; place-items: center; width: 24px; height: 24px; background: #dce6f2;`;
const Tray = styled.div`display: flex; align-items: center; margin-left: auto; white-space: nowrap;`;
const Weather = styled.button`display: flex; align-items: center; gap: 11px; font-size: 14px; margin-right: 10px;`;
const Clock = styled.time`width: 70px; text-align: center; line-height: 18px;`;
const TrayEnd = styled.span`width: 5px; height: 40px; margin-left: 20px; border-left: 1px solid #b0b4c0;`;
const Pad = styled.span<{ $w?: number }>`display: flex; margin-left: ${p => p.$w ?? 9}px;`;

const Tool = ({ label, children, on, w }: { label: string; children: React.ReactNode; on?: boolean; w?: number }) => (
  <ToolButton aria-label={label} $on={on} $w={w}>{children}</ToolButton>
);
const Drop = ({ w = 12 }: { w?: number }) => <ToolButton aria-label="More" $w={w}><Caret w={6} /></ToolButton>;
const Panel = ({ w, label, children }: { w: number; label: string; children: React.ReactNode }) => (
  <PanelBox $w={w}><PanelBody>{children}</PanelBody><PanelLabel>{label}</PanelLabel></PanelBox>
);
const Cmd = ({ icon, children, off, menu }: { icon: React.ReactNode; children: React.ReactNode; off?: boolean; menu?: boolean }) => (
  <Command $off={off}>{icon}<span>{children}</span>{menu && <Caret w={6} />}</Command>
);
type ComboProps = { label: string; value: string; w?: number; h: number; bg?: string; line?: string; c?: string; thin?: boolean };
const Combo = ({ label, value, w, h, bg, line, c, thin }: ComboProps) => (
  <SelectWrap $w={w} $h={h} $bg={bg} $line={line}>
    <NativeSelect aria-label={label} $c={c}><option>{value}</option></NativeSelect>
    {thin ? <Chevron turn={180} color="#777" s={10} sw={1} /> : <Caret />}
  </SelectWrap>
);

const tabs: [string, number][] = [['Architecture', 85], ['Insert', 49], ['Annotate', 69], ['Analyze', 61], ['Massing & Site', 99], ['Collaborate', 81], ['View', 45], ['Manage', 63], ['Add-Ins', 62], ['Modify', 59]];

export default function App() {
  return (
    <Shell>
      <Global />
      <ShareBar />
      <TitleBar>
        <Group>
          <Tool label="Revit"><RevitLogo /></Tool>
          <Tool label="Home"><UiIcon /></Tool>
          <ToolGap />
          <Tool label="Open"><OpenIcon /></Tool>
          <Tool label="Save"><SaveIcon /></Tool>
          <Tool label="Synchronize"><SyncIcon /></Tool><Drop />
          <Tool label="Undo"><UndoIcon /></Tool><Drop />
          <Tool label="Redo"><RedoIcon /></Tool><Drop />
          <Tool label="Print"><PrintIcon /></Tool>
          <Divider />
          <Tool label="Measure"><MeasureIcon /></Tool><Drop w={13} />
          <Tool label="Dimension"><DimIcon /></Tool>
          <Tool label="Tag"><TagIcon /></Tool>
          <Tool label="Text"><LetterIcon /></Tool>
          <Divider />
          <Tool label="3D view"><HouseIcon /></Tool><Drop />
          <Tool label="Section"><SectionIcon /></Tool>
          <Tool label="Thin lines" on><ThinIcon /></Tool>
          <Divider />
          <Tool label="Close inactive"><CloseHiddenIcon /></Tool>
          <Tool label="Switch windows"><SwitchIcon /></Tool><Drop w={7} />
          <Tool label="Customize"><MoreIcon /></Tool>
        </Group>
        <WindowTitle>03_04 - Color Fill Plan - Schedule: ROOM SCHEDULE</WindowTitle>
        <Group>
          <Tool label="Previous" w={12}><Icon w={5} h={8}><path d="M5 0v8L0 4z" fill="#333" stroke="none" /></Icon></Tool>
          <Tool label="Search"><Binoculars /></Tool>
          <UserButton><UserIcon /><span>mercylovegra...</span><Caret w={5} /></UserButton>
          <Trial><ClockIcon />25</Trial>
          <Tool label="Store" w={28}><CartIcon /></Tool>
          <Divider />
          <Tool label="Help" w={30}><HelpIcon /></Tool><Drop w={6} />
          <ToolGap $w={12} />
          <Tool label="Minimize" w={24}><Icon w={9} h={10}><path d="M0 9h9" stroke="#333" strokeWidth="2" /></Icon></Tool>
          <Tool label="Restore" w={26}><Icon w={13} h={11}><path d="M3.500 4V1h8v5H9M1 4.500h8V10H1z" stroke="#333" strokeWidth="1.500" /></Icon></Tool>
          <Tool label="Close" w={26}><Cross s={12} sw={2} /></Tool>
        </Group>
      </TitleBar>
      <TabStrip>
        <RibbonTab $w={45} $kind="file">File</RibbonTab>
        {tabs.map(([t, w]) => <RibbonTab key={t} $w={w}>{t}</RibbonTab>)}
        <RibbonTab $w={166} $kind="on">Modify Schedule/Quantities</RibbonTab>
        <Collapse aria-label="Minimize ribbon"><CollapsePill><Icon w={6} h={3}><path d="M0 3h6L3 0z" fill="#222" stroke="none" /></Icon></CollapsePill><Caret w={5} color="#111" /></Collapse>
      </TabStrip>

      <Ribbon>
        <Panel w={65} label="Properties"><BigCommand $on><PropertiesBig />Properties</BigCommand></Panel>
        <Panel w={251} label="Parameters">
          <Stack $w={100} $gap={2} $top={1}>
            <Combo label="Category" value="Rooms" h={22} />
            <Combo label="Parameter" value="Level" h={22} />
          </Stack>
          <Stack $ml={5}>
            <Cmd icon={<FormatIcon />} off>Format&nbsp; Unit</Cmd>
            <Cmd icon={<FxIcon />}>Calculated</Cmd>
            <Cmd icon={<CombineIcon />}>Combine Parameters</Cmd>
          </Stack>
        </Panel>
        <Panel w={157} label="Columns">
          <Stack $w={63} $ml={4}>
            <Cmd icon={<ColInsert />}>Insert</Cmd>
            <Cmd icon={<ColDelete />}>Delete</Cmd>
            <Cmd icon={<ColResize />}>Resize</Cmd>
          </Stack>
          <Stack>
            <Cmd icon={<HideCol />}>Hide</Cmd>
            <Cmd icon={<HideCol off />} off>Unhide All</Cmd>
          </Stack>
        </Panel>
        <Panel w={183} label="Rows">
          <Stack $w={115} $ml={4}>
            <Cmd icon={<RowInsertOff />} off menu>Insert</Cmd>
            <Cmd icon={<InsertRow />}>Insert Data Row</Cmd>
            <Cmd icon={<DeleteRow />}>Delete</Cmd>
          </Stack>
          <Stack><Cmd icon={<RowResizeOff />} off>Resize</Cmd></Stack>
        </Panel>
        <Panel w={232} label="Titles & Headers">
          <Stack $w={119} $ml={4}>
            <Cmd icon={<MergeIcon />} off>Merge Unmerge</Cmd>
            <Cmd icon={<ImageIcon />} off>Insert Image</Cmd>
            <Cmd icon={<ClearIcon />} off>Clear Cell</Cmd>
          </Stack>
          <Stack>
            <Cmd icon={<GroupIcon />} off>Group</Cmd>
            <Cmd icon={<GroupIcon x />} off>Ungroup</Cmd>
            <Cmd icon={<FreezeIcon />}>Freeze Header</Cmd>
          </Stack>
        </Panel>
        <Panel w={74} label="Appearance">
          <Stack>
            <SmallIconRow><IconButton aria-label="Shading"><ShadeIcon /></IconButton><IconButton aria-label="Font"><FontIcon /></IconButton></SmallIconRow>
            <SmallIconRow><IconButton aria-label="Borders"><BordersIcon /></IconButton><IconButton aria-label="Align horizontal"><AlignIcon /><Caret w={5} color="#888" /></IconButton></SmallIconRow>
            <SmallIconRow><IconButton aria-label="Reset"><ResetIcon /></IconButton><IconButton aria-label="Align vertical"><AlignIcon mid /><Caret w={5} color="#888" /></IconButton></SmallIconRow>
          </Stack>
        </Panel>
        <Panel w={61} label="Element"><BigCommand><HighlightBig /><span>Highlight<br />in Model</span></BigCommand></Panel>
        <Panel w={135} label="Not Placed/Unenclosed">
          <Stack $ml={33} $w={64} $top={3}>
            <StateButton $on><RowState bulb="#f0a020" />Show</StateButton>
            <StateButton><RowState bulb="#5a9ee0" />Hide</StateButton>
            <StateButton><RowState glasses />Isolate</StateButton>
          </Stack>
        </Panel>
        <Panel w={50} label="Error"><BigCommand $off><ExplainBig />Explain</BigCommand></Panel>
        <Panel w={46} label="Split"><BigCommand><SplitBig /><span>Split &amp;<br />Place</span></BigCommand></Panel>
      </Ribbon>

      <OptionsBar>
        <OptionsTitle>Modify Schedule/Quantities</OptionsTitle>
        <Divider $h={21} $m={1} />
        <FormButton>New</FormButton>
        <FormButton>Delete</FormButton>
      </OptionsBar>

      <Main>
        <Side>
          <SideHead $h={21}><HeadText>Properties</HeadText><IconButton aria-label="Close properties"><Cross /></IconButton></SideHead>
          <TypeBox><Thumb><TableBig /></Thumb><TypeName>Schedule</TypeName><Caret /></TypeBox>
          <InstanceRow>
            <Combo label="Instance" value="Schedule: ROOM SCHEDULE" w={134} h={23} bg="#e3e3e3" line="#adadad" thin />
            <LinkButton><EditTypeIcon />Edit Type</LinkButton>
          </InstanceRow>
          <ScrollArea $h={121}>
            <Clip>
              <PropTable>
                <colgroup><col width="94" /><col width="93" /><col /></colgroup>
                <tbody>
                  <tr><PropHead colSpan={3}><HeadFlex>Phasing<DoubleUp /></HeadFlex></PropHead></tr>
                  <tr><PropName>Phase</PropName><PropCell><PropText>New Construct...</PropText></PropCell><PropCell /></tr>
                  <tr><PropHead colSpan={3}><HeadFlex>Other<DoubleUp /></HeadFlex></PropHead></tr>
                  {['Fields', 'Filter', 'Sorting/Grou...', 'Formatting'].map(t => (
                    <tr key={t}><PropName>{t}</PropName><PropCell><EditButton>Edit...</EditButton></PropCell><PropCell /></tr>
                  ))}
                </tbody>
              </PropTable>
            </Clip>
            <Scroll v at={32} len={33} />
          </ScrollArea>
          <SideFoot><HelpLink href="#help">Properties help</HelpLink><ApplyButton>Apply</ApplyButton></SideFoot>
          <Splitter />
          <SideHead><HeadText $small>Project Browser - 03_04 - Color Fill...</HeadText><IconButton aria-label="Close browser"><Cross /></IconButton></SideHead>
          <ScrollArea>
            <Clip>
              <Tree>
                {nodes.map((n, i) => (
                  <TreeRow key={i}>
                    {n.depth > 1 && <Guide $up $down />}
                    {n.depth > 2 && <Guide $up={n.mid} $down={n.mid} />}
                    <Guide $wide={n.depth > 1} $up $down={!n.last} $across>
                      {n.open && <Expander aria-label={`Collapse ${n.text}`} />}
                    </Guide>
                    {n.icon && <TreeIcon>{n.icon}</TreeIcon>}
                    <TreeLabel $bold={n.bold} $sel={n.sel}>{n.text}</TreeLabel>
                  </TreeRow>
                ))}
              </Tree>
            </Clip>
            <Scroll v at={80} len={17} size={15} />
          </ScrollArea>
          <ScrollFoot $left={1}><Scroll at={0} len={104} /></ScrollFoot>
        </Side>

        <DocArea>
          <DocTabs>
            <DocTab $w={141}><PlanIcon />GROUND FLOOR</DocTab>
            <DocTab $on $w={152}><TableIcon />ROOM SCHEDULE<Cross s={9} /></DocTab>
            <DocMenu aria-label="Open tabs"><MoreIcon /></DocMenu>
          </DocTabs>
          <Sheet>
            <SheetClip>
              <Grid>
                <colgroup>{widths.map((w, i) => <col key={i} width={w} />)}<col /></colgroup>
                <tbody>
                  {rows.map(r => <tr key={r[2]}>{r.map((c, i) => <td key={i}>{c}</td>)}</tr>)}
                </tbody>
              </Grid>
            </SheetClip>
            <Scroll v at={142} len={180} />
          </Sheet>
          <ScrollFoot $left={2}><Scroll at={0} /></ScrollFoot>
        </DocArea>
      </Main>

      <StatusBar>
        <StatusText>Zoom in or out using the Ctrl + mouse wheel or Ctrl + [</StatusText>
        <Group $gap={8}><WorksetIcon /><Combo label="Active workset" value="" w={204} h={19} thin /></Group>
        <Pad><EditableIcon /></Pad><StatusCount>:0</StatusCount>
        <Group $gap={10}><OptionsIcon /><AddOption /></Group>
        <Pad $w={8}><Combo label="Design option" value="Main Model" w={204} h={19} c="#777" thin /></Pad>
        <StatusTools><LinkSel /><UnderSel /><PinSel /><FaceSel /><DragSel /><BusyIcon /><Group><FunnelIcon />:0</Group></StatusTools>
        <Zoom>100%</Zoom>
      </StatusBar>

      <TaskBar>
        <TaskButton $w={48} aria-label="Start"><WinIcon /></TaskButton>
        <SearchBox><SearchIcon /><SearchInput placeholder="Type here to search" aria-label="Type here to search" /></SearchBox>
        <TaskButton $w={48} aria-label="Cortana"><Ring /></TaskButton>
        <TaskButton $w={50} aria-label="Task view"><TaskView /></TaskButton>
        <TaskButton aria-label="Edge"><EdgeIcon /></TaskButton>
        <TaskButton aria-label="File Explorer"><FolderIcon /></TaskButton>
        <TaskButton aria-label="Store"><StoreIcon /></TaskButton>
        <TaskButton $run aria-label="Revit"><Plate><RevitLogo s={20} /></Plate></TaskButton>
        <TaskButton $run aria-label="Chrome"><ChromeIcon /></TaskButton>
        <TaskButton $on aria-label="Snipping Tool"><SnipIcon /></TaskButton>
        <Tray>
          <Weather><SunIcon /><span>63°F&nbsp; Sunny</span></Weather>
          <Group $gap={8}>
            <Icon><path d="M2.500 11L8 5l5.500 6" stroke="#111" strokeWidth="1.300" /></Icon>
            <MeetIcon /><CloudIcon /><NetIcon /><VolIcon />
          </Group>
          <Clock>3:02 PM<br />1/29/2022</Clock>
          <Pad $w={10}><NoteIcon /></Pad>
          <TrayEnd />
        </Tray>
      </TaskBar>
    </Shell>
  );
}
